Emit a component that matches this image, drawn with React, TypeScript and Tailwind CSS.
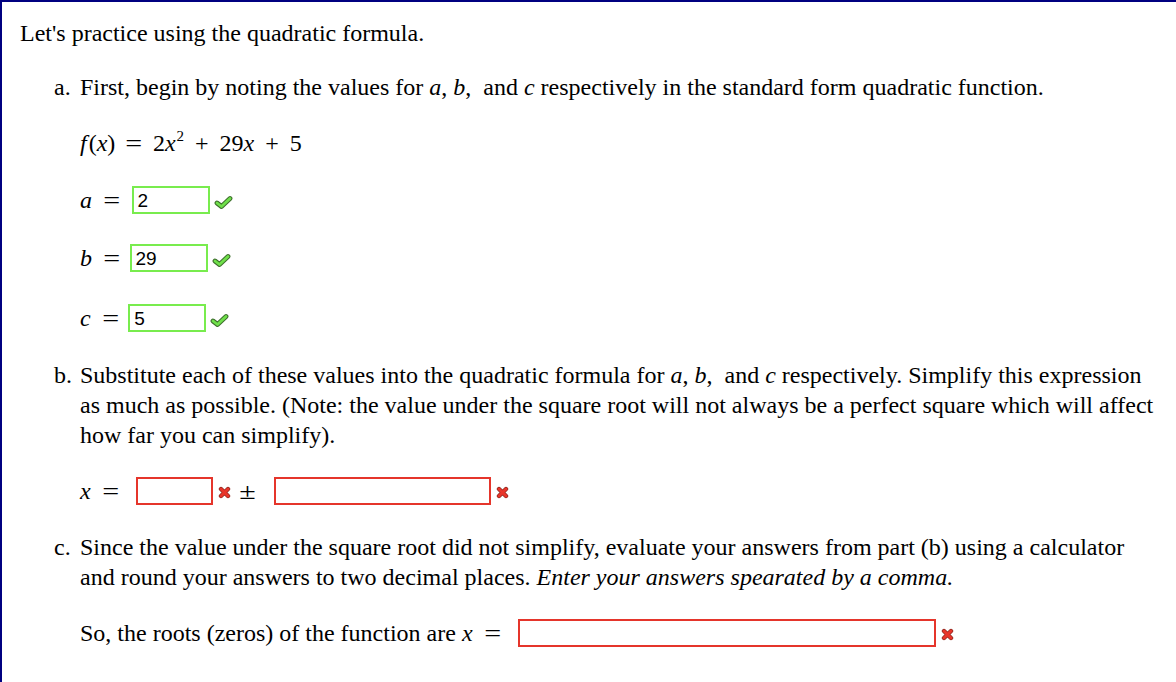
import React from 'react';

// Quadratic formula practice worksheet: static reproduction of a graded homework page.

function Check() {
  return (
    <svg width="19" height="15" viewBox="0 0 19 15" className="ml-[4px] mt-[4px] shrink-0">
      <path d="M3 8 L7.5 11.5 L16 3.5" fill="none" stroke="#3d6e2c" strokeWidth="4.8" strokeLinecap="round" strokeLinejoin="round" />
      <path d="M3 8 L7.5 11.5 L16 3.5" fill="none" stroke="#6fe04a" strokeWidth="2.8" strokeLinecap="round" strokeLinejoin="round" />
    </svg>
  );
}

function Cross() {
  return (
    <svg width="13" height="13" viewBox="0 0 13 13" className="ml-[5px] mt-[2px] shrink-0">
      <path d="M3 3 L10 10 M10 3 L3 10" fill="none" stroke="#8e2a22" strokeWidth="4.4" strokeLinecap="round" />
      <path d="M3 3 L10 10 M10 3 L3 10" fill="none" stroke="#e8352a" strokeWidth="3" strokeLinecap="round" />
    </svg>
  );
}

function Box({ value = '', width, ok }: { value?: string; width: string; ok: boolean }) {
  return (
    <div
      className={`flex h-[28px] ${width} items-center border-2 px-[4px] font-['Liberation_Sans'] text-[19px] leading-none ${
        ok ? 'border-[#78ec4e]' : 'border-[#e5352b]'
      }`}
    >
      {value}
    </div>
  );
}

const M = ({ children }: { children: React.ReactNode }) => (
  <span className="font-['Liberation_Serif'] italic">{children}</span>
);

const Eq = () => <span className="inline-block scale-x-125 px-[1px]">=</span>;

function VarRow({ name, value, gap }: { name: string; value: string; gap: string }) {
  return (
    <div className="flex h-[30px] items-center">
      <M>{name}</M>
      <span className="ml-[12px]">
        <Eq />
      </span>
      <div className={gap}>
        <Box value={value} width="w-[78px]" ok />
      </div>
      <Check />
    </div>
  );
}

function Item({ mark, children, className = '' }: { mark: string; children: React.ReactNode; className?: string }) {
  return (
    <div className={`flex ${className}`}>
      <div className="w-[26px] shrink-0">{mark}</div>
      <div className="min-w-0 flex-1">{children}</div>
    </div>
  );
}

export default function App() {
  return (
    <div className="min-h-[682px] border-l-2 border-t-2 border-[#000080] pl-[18px] pr-[16px] pt-[16px] font-['Liberation_Serif'] text-[24px] leading-[30px] text-black">
      <p>Let's practice using the quadratic formula.</p>

      <div className="pl-[34px]">
        <Item mark="a." className="mt-[24px]">
          <p>
            First, begin by noting the values for <M>a</M>, <M>b</M>,&nbsp; and <M>c</M> respectively in the standard
            form quadratic function.
          </p>
          <div className="mt-[26px] flex h-[30px] items-center">
            <M>f</M>
            <span className="ml-[2px]">(</span>
            <M>x</M>
            <span>)</span>
            <span className="ml-[11px]">
              <Eq />
            </span>
            <span className="ml-[11px]">2</span>
            <M>x</M>
            <span className="ml-[1px] -translate-y-[7px] text-[15px] leading-none">2</span>
            <span className="ml-[11px]">+</span>
            <span className="ml-[11px]">29</span>
            <M>x</M>
            <span className="ml-[11px]">+</span>
            <span className="ml-[11px]">5</span>
          </div>
          <div className="mt-[27px]">
            <VarRow name="a" value="2" gap="ml-[12px]" />
          </div>
          <div className="mt-[28px]">
            <VarRow name="b" value="29" gap="ml-[10px]" />
          </div>
          <div className="mt-[30px]">
            <VarRow name="c" value="5" gap="ml-[10px]" />
          </div>
        </Item>

        <Item mark="b." className="mt-[27px]">
          <p>
            Substitute each of these values into the quadratic formula for <M>a</M>, <M>b</M>,&nbsp; and <M>c</M>{' '}
            respectively. Simplify this expression as much as possible. (Note: the value under the square root will not
            always be a perfect square which will affect how far you can simplify).
          </p>
          <div className="mt-[26px] flex h-[30px] items-center">
            <M>x</M>
            <span className="ml-[12px]">
              <Eq />
            </span>
            <div className="ml-[18px]">
              <Box width="w-[77px]" ok={false} />
            </div>
            <Cross />
            <span className="ml-[10px] inline-block scale-x-125">±</span>
            <div className="ml-[20px]">
              <Box width="w-[217px]" ok={false} />
            </div>
            <Cross />
          </div>
        </Item>

        <Item mark="c." className="mt-[26px]">
          <p>
            Since the value under the square root did not simplify, evaluate your answers from part (b) using a
            calculator and round your answers to two decimal places. <i>Enter your answers spearated by a comma.</i>
          </p>
          <div className="mt-[26px] flex h-[30px] items-center">
            <span>So, the roots (zeros) of the function are</span>
            <span className="ml-[6px]">
              <M>x</M>
            </span>
            <span className="ml-[12px]">
              <Eq />
            </span>
            <div className="ml-[18px]">
              <Box width="w-[418px]" ok={false} />
            </div>
            <Cross />
          </div>
        </Item>
      </div>
    </div>
  );
}
